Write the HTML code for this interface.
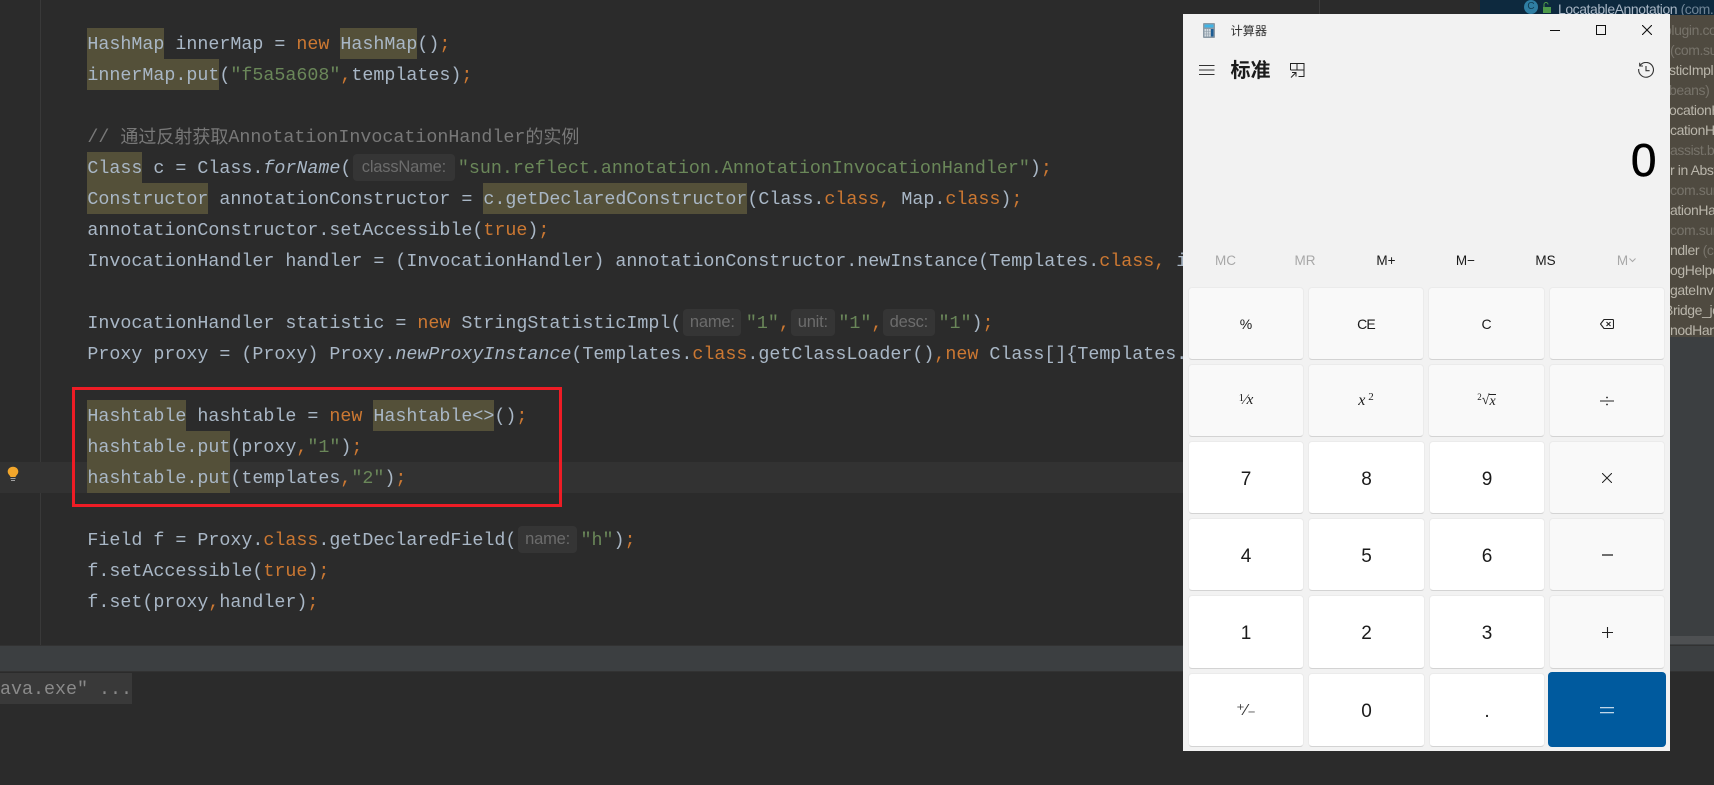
<!DOCTYPE html>
<html><head><meta charset="utf-8">
<style>
html,body{margin:0;padding:0;background:#2b2b2b;width:1714px;height:785px;overflow:hidden}
.a{position:absolute}
#ed{position:absolute;left:0;top:0;width:1714px;height:785px;overflow:hidden}
.r{position:absolute;left:87.4px;height:31px;font:18.34px/34px "Liberation Mono",monospace;color:#a9b7c6;white-space:pre}
.h{background:#545039;display:inline-block;height:31px;vertical-align:top}
.k{color:#cc7832}.s{color:#6a8759}.i{font-style:italic}
.c{color:#787878}
.zh{display:inline-block;font-family:"Noto Sans CJK SC",sans-serif;font-size:18px;line-height:31px;vertical-align:top}
.n{display:inline-block;height:31px;vertical-align:top;position:relative}
.n b{position:absolute;top:2px;height:27px;background:#353535;border-radius:4px;color:#6c6c6c;font:400 16.5px/26px "Liberation Sans",sans-serif;text-align:center;letter-spacing:-.2px}
#calc{position:absolute;left:1183px;top:14px;width:487px;height:737px;background:#f2f2f2}
.b{position:absolute;box-sizing:border-box;background:#f9f9f9;border:1px solid #ebebeb;border-bottom:1.5px solid #d3d3d3;border-radius:4px;color:#1b1b1b;font:400 14px "Liberation Sans",sans-serif;display:flex;align-items:center;justify-content:center}
.w{background:#fff;font-size:19px;padding-top:4px}
.m{position:absolute;top:237px;width:77px;text-align:center;font:400 13.5px/20px "Liberation Sans",sans-serif;color:#1b1b1b}
.d{color:#a8a8a8}
.t{position:absolute;left:1670px;width:44px;height:20px;overflow:hidden;white-space:nowrap;font:14px/20px "Liberation Sans",sans-serif;letter-spacing:-.4px;color:#b9b5aa}
.t.f{color:#77736a}
</style></head><body>
<div id="ed">
<div class="a" style="left:40px;top:0;width:1px;height:645px;background:#393939"></div>
<div class="a" style="left:0;top:462px;width:1183px;height:31px;background:#323232"></div>

<div class="r" style="top:28px"><span class="h">HashMap</span> innerMap = <span class="k">new</span> <span class="h">HashMap</span>()<span class="k">;</span></div>
<div class="r" style="top:59px"><span class="h">innerMap.put</span>(<span class="s">"f5a5a608"</span><span class="k">,</span>templates)<span class="k">;</span></div>
<div class="r c" style="top:121px">// <span class="zh" style="width:108px">通过反射获取</span>AnnotationInvocationHandler<span class="zh">的实例</span></div>
<div class="r" style="top:152px"><span class="h">Class</span> c = Class.<span class="i">forName</span>(<span class="n" style="width:106.5px"><b style="left:1.500px;width:102px">className:</b></span><span class="s">"sun.reflect.annotation.AnnotationInvocationHandler"</span>)<span class="k">;</span></div>
<div class="r" style="top:183px"><span class="h">Constructor</span> annotationConstructor = <span class="h">c.getDeclaredConstructor</span>(Class.<span class="k">class,</span> Map.<span class="k">class</span>)<span class="k">;</span></div>
<div class="r" style="top:214px">annotationConstructor.setAccessible(<span class="k">true</span>)<span class="k">;</span></div>
<div class="r" style="top:245px">InvocationHandler handler = (InvocationHandler) annotationConstructor.newInstance(Templates.<span class="k">class,</span> invocationHandler)<span class="k">;</span></div>
<div class="r" style="top:307px">InvocationHandler statistic = <span class="k">new</span> StringStatisticImpl(<span class="n" style="width:64.5px"><b style="left:2px;width:58px">name:</b></span><span class="s">"1"</span><span class="k">,</span><span class="n" style="width:48.5px"><b style="left:.8px;width:44.4px">unit:</b></span><span class="s">"1"</span><span class="k">,</span><span class="n" style="width:56.2px"><b style="left:.5px;width:52px">desc:</b></span><span class="s">"1"</span>)<span class="k">;</span></div>
<div class="r" style="top:338px">Proxy proxy = (Proxy) Proxy.<span class="i">newProxyInstance</span>(Templates.<span class="k">class</span>.getClassLoader()<span class="k">,new</span> Class[]{Templates.<span class="k">class</span>}<span class="k">,</span>statistic)<span class="k">;</span></div>
<div class="r" style="top:400px"><span class="h">Hashtable</span> hashtable = <span class="k">new</span> <span class="h">Hashtable&lt;&gt;</span>()<span class="k">;</span></div>
<div class="r" style="top:431px"><span class="h">hashtable.put</span>(proxy<span class="k">,</span><span class="s">"1"</span>)<span class="k">;</span></div>
<div class="r" style="top:462px"><span class="h">hashtable.put</span>(templates<span class="k">,</span><span class="s">"2"</span>)<span class="k">;</span></div>
<div class="r" style="top:524px">Field f = Proxy.<span class="k">class</span>.getDeclaredField(<span class="n" style="width:64.2px"><b style="left:2px;width:58.5px">name:</b></span><span class="s">"h"</span>)<span class="k">;</span></div>
<div class="r" style="top:555px">f.setAccessible(<span class="k">true</span>)<span class="k">;</span></div>
<div class="r" style="top:586px">f.set(proxy<span class="k">,</span>handler)<span class="k">;</span></div>

<svg class="a" style="left:6px;top:466px" width="14" height="16" viewBox="0 0 14 16"><path d="M7 .7C3.9.7 1.700 2.900 1.700 5.500c0 2 1.100 3 2 4.100.5.600.7 1 .7 1.400h5.200c0-.4.200-.8.700-1.400.9-1.100 2-2.100 2-4.100C12.300 2.900 10.100.7 7 .7z" fill="#f2a62b"/><path d="M4.500 12.500h5M5 14.500h4" stroke="#a0a0a0" stroke-width="1"/></svg>

<div class="a" style="left:71.5px;top:387px;width:484.5px;height:114px;border:3px solid #ee1c25"></div>

<div class="a" style="left:0;top:645px;width:1714px;height:27px;background:#3c3f41;border-top:1px solid #323232;border-bottom:1px solid #323232;box-sizing:border-box"></div>
<div class="r" style="left:0;top:673px;background:#393939;color:#8a8a8a;width:132px">ava.exe" ...</div>

<div class="a" style="left:1319px;top:0;width:1px;height:14px;background:#3c3c3c"></div>
<div class="a" style="left:1480px;top:0;width:234px;height:15px;background:#0d293e"></div>
<div class="a" style="left:1524px;top:0;width:14px;height:14px;border-radius:50%;background:#2f7ea3;color:#0f3a52;font:10px/14px 'Liberation Sans',sans-serif;text-align:center">C</div>
<svg class="a" style="left:1542px;top:2px" width="10" height="11" viewBox="0 0 10 11"><path d="M2 5V2.500a2 2 0 0 1 4 0" stroke="#4e9a4a" fill="none"/><rect x="1" y="5" width="8" height="6" fill="#4e9a4a"/></svg>
<div class="a" style="left:1558px;top:0;font:14px/18px 'Liberation Sans',sans-serif;letter-spacing:-.45px;color:#a9b7c6;white-space:nowrap">LocatableAnnotation <span style="color:#6f8496">(com.</span></div>
<div class="a" style="left:1670px;top:15px;width:44px;height:322px;background:#4f4a40"></div>
<div class="a" style="left:1670px;top:337px;width:44px;height:308px;background:#3c3f41"></div>
<div class="a" style="left:1670px;top:636px;width:44px;height:8px;background:#4e5052"></div>
<div class="t f" style="top:20px;text-indent:-6px">plugin.co</div>
<div class="t f" style="top:40px">(com.su</div>
<div class="t" style="top:60px;text-indent:-1px">sticImpl</div>
<div class="t f" style="top:80px;text-indent:-1px">beans)</div>
<div class="t" style="top:100px;text-indent:-1px">ocationH</div>
<div class="t" style="top:120px">cationHa</div>
<div class="t f" style="top:140px">assist.b</div>
<div class="t" style="top:160px">r in Abst</div>
<div class="t f" style="top:180px">com.sun</div>
<div class="t" style="top:200px">ationHar</div>
<div class="t f" style="top:220px">com.sun</div>
<div class="t" style="top:240px">ndler <span style="color:#77736a">(c</span></div>
<div class="t" style="top:260px">ogHelpe</div>
<div class="t" style="top:280px">gateInv</div>
<div class="t" style="top:300px;text-indent:-6px">Bridge_jo</div>
<div class="t" style="top:320px">nodHan</div>

<div id="calc">
<svg class="a" style="left:20px;top:9px" width="12" height="15" viewBox="0 0 12 15"><rect width="12" height="15" rx="1" fill="#8b9aa6"/><rect x="1.500" y="1.500" width="9" height="3" fill="#3fb4e6"/><rect x="1.500" y="6" width="6" height="7.500" fill="#cfd8de"/><path d="M3.500 6v7.500M5.500 6v7.500M1.500 8.500h6M1.500 11h6" stroke="#8b9aa6" stroke-width=".6"/><rect x="8" y="6" width="2.500" height="7.500" fill="#1d5d95"/></svg>
<div class="a" style="left:47.5px;top:6px;font:12.2px/20px 'Noto Sans CJK SC',sans-serif;color:#333">计算器</div>
<div class="a" style="left:367px;top:16px;width:10px;height:1px;background:#111"></div>
<div class="a" style="left:413px;top:11px;width:8px;height:8px;border:1.5px solid #111"></div>
<svg class="a" style="left:459px;top:11px" width="10" height="10" viewBox="0 0 10 10"><path d="M0 0l10 10M10 0L0 10" stroke="#111" stroke-width="1.100" fill="none"/></svg>
<svg class="a" style="left:16px;top:50px" width="16" height="12" viewBox="0 0 16 12"><path d="M0 1.500h15.500M0 6h15.500M0 10.500h15.500" stroke="#333" stroke-width="1.100" fill="none"/></svg>
<div class="a" style="left:47.5px;top:42px;font:700 20px/26px 'Noto Sans CJK SC',sans-serif;color:#1b1b1b">标准</div>
<svg class="a" style="left:107px;top:49px" width="15" height="15" viewBox="0 0 15 15"><path d="M.5 7V.5H14V13.500H8.500M7 .5V7H14M.5 7H7M1 14.500l5-5M2 9.500h4v4" stroke="#222" stroke-width="1" fill="none"/></svg>
<svg class="a" style="left:454.500px;top:48px" width="16" height="16" viewBox="0 0 16 16"><path d="M2.200 3.300A7.400 7.400 0 1 1 .7 7M1.700.7V4H5M8 4V8.700H11.600" stroke="#333" stroke-width="1.100" fill="none"/></svg>
<div class="a" style="right:13.5px;top:118px;font:400 46px/56px 'Liberation Sans',sans-serif;color:#000;-webkit-text-stroke:.5px #000">0</div>

<div class="m d" style="left:4px">MC</div>
<div class="m d" style="left:83.5px">MR</div>
<div class="m" style="left:164.5px">M+</div>
<div class="m" style="left:244px">M−</div>
<div class="m" style="left:324px">MS</div>
<div class="m d" style="left:405px">M<svg width="7" height="5" viewBox="0 0 7 5" style="margin-left:1px;vertical-align:2px"><path d="M.5 .5l3 3 3-3" stroke="#a8a8a8" fill="none"/></svg></div>

<div class="b" style="left:5px;top:273px;width:116px;height:73px;padding-top:1px">%</div>
<div class="b" style="left:125px;top:273px;width:116px;height:73px;letter-spacing:-.9px;padding-top:1px">CE</div>
<div class="b" style="left:245px;top:273px;width:117px;height:73px;padding-top:1px">C</div>
<div class="b" style="left:366px;top:273px;width:116px;height:73px"><svg width="14" height="10" viewBox="0 0 14 10"><path d="M4 .5H12.500a1 1 0 0 1 1 1v7a1 1 0 0 1-1 1H4L.5 5zM6.500 3l4 4M10.500 3l-4 4" stroke="#222" stroke-width="1.100" fill="none"/></svg></div>

<div class="b" style="left:5px;top:350px;width:116px;height:73px;font:italic 15px 'Liberation Serif',serif"><span style="font-style:normal;font-size:11px;margin-top:-5px">1</span>⁄x</div>
<div class="b" style="left:125px;top:350px;width:116px;height:73px;font:italic 16px 'Liberation Serif',serif">x<span style="font-style:normal;font-size:11px;margin:-8px 0 0 3px">2</span></div>
<div class="b" style="left:245px;top:350px;width:117px;height:73px;font:italic 14px 'Liberation Serif',serif"><span style="font-style:normal;font-size:9px;margin-top:-8px">2</span><span style="font-style:normal">√</span><span style="border-top:1px solid #222;line-height:13px">x</span></div>
<div class="b" style="left:366px;top:350px;width:116px;height:73px"><svg width="14" height="10" viewBox="0 0 14 10"><path d="M0 5h14" stroke="#222" fill="none"/><circle cx="7" cy="1.500" r=".9" fill="#222"/><circle cx="7" cy="8.500" r=".9" fill="#222"/></svg></div>

<div class="b w" style="left:5px;top:427px;width:116px;height:73px">7</div>
<div class="b w" style="left:125px;top:427px;width:117px;height:73px">8</div>
<div class="b w" style="left:246px;top:427px;width:116px;height:73px">9</div>
<div class="b" style="left:366px;top:427px;width:116px;height:73px"><svg width="10" height="10" viewBox="0 0 10 10"><path d="M0 0l10 10M10 0L0 10" stroke="#222" fill="none"/></svg></div>

<div class="b w" style="left:5px;top:504px;width:116px;height:73px">4</div>
<div class="b w" style="left:125px;top:504px;width:117px;height:73px">5</div>
<div class="b w" style="left:246px;top:504px;width:116px;height:73px">6</div>
<div class="b" style="left:366px;top:504px;width:116px;height:73px"><svg width="11" height="2" viewBox="0 0 11 2"><path d="M0 1h11" stroke="#222" stroke-width="1.300" fill="none"/></svg></div>

<div class="b w" style="left:5px;top:581px;width:116px;height:74px">1</div>
<div class="b w" style="left:125px;top:581px;width:117px;height:74px">2</div>
<div class="b w" style="left:246px;top:581px;width:116px;height:74px">3</div>
<div class="b" style="left:366px;top:581px;width:116px;height:74px"><svg width="11" height="11" viewBox="0 0 11 11"><path d="M0 5.500h11M5.500 0v11" stroke="#222" stroke-width="1.100" fill="none"/></svg></div>

<div class="b w" style="left:5px;top:659px;width:116px;height:74px;font-size:16px;color:#333;padding-top:0">⁺∕₋</div>
<div class="b w" style="left:125px;top:659px;width:117px;height:74px">0</div>
<div class="b w" style="left:246px;top:659px;width:116px;height:74px">.</div>
<div class="a" style="left:365px;top:658px;width:118px;height:75px;background:#005a9e;border-radius:4px"><svg class="a" style="left:52px;top:35px" width="14" height="7" viewBox="0 0 14 7"><path d="M0 .7h14M0 5.700h14" stroke="#dbe8f3" stroke-width="1.200" fill="none"/></svg></div>
</div>
</div>
</body></html>
